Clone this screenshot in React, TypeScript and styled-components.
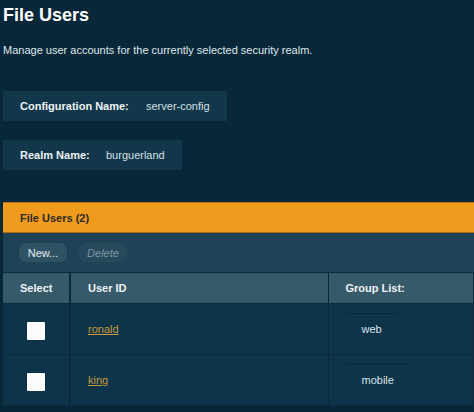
import React from 'react';
import styled, { createGlobalStyle } from 'styled-components';

const GlobalStyle = createGlobalStyle`
  html, body {
    margin: 0;
    padding: 0;
    background: #08283a;
    font-family: "Liberation Sans", Arial, sans-serif;
  }
`;

const Page = styled.div`
  padding: 3px 0 0 3px;
  color: #e9eff2;
  overflow: hidden;
`;

const Title = styled.h1`
  margin: 0;
  font-size: 18px;
  line-height: 24px;
  font-weight: bold;
  color: #ffffff;
`;

const Subtitle = styled.p`
  margin: 15px 0 0;
  font-size: 11px;
  line-height: 16px;
  color: #dfe7eb;
`;

const InfoList = styled.div`
  display: flex;
  flex-direction: column;
  align-items: flex-start;
  gap: 19px;
  margin-top: 33px;
`;

const InfoBox = styled.div`
  display: flex;
  align-items: center;
  height: 30px;
  padding: 0 17px;
  background: #12364a;
  font-size: 11px;
`;

const InfoLabel = styled.span<{ $width: number }>`
  width: ${p => p.$width}px;
  font-weight: bold;
  color: #eef3f5;
`;

const InfoValue = styled.span`
  color: #d6e0e5;
`;

const Panel = styled.section`
  margin-top: 32px;
`;

const PanelHeader = styled.div`
  height: 31px;
  display: flex;
  align-items: center;
  padding-left: 17px;
  background: #f09a1e;
  border-top: 1px solid #b8741a;
  border-bottom: 1px solid #a86a18;
  box-sizing: border-box;
  font-size: 11px;
  font-weight: bold;
  color: #2a2a24;
`;

const Toolbar = styled.div`
  height: 39px;
  display: flex;
  align-items: center;
  gap: 12px;
  padding: 0 16px;
  background: #1e4256;
  box-sizing: border-box;
`;

const ToolButton = styled.button<{ $disabled?: boolean }>`
  height: 19px;
  padding: 0 8px;
  border: none;
  border-radius: 7px;
  background: ${p => (p.$disabled ? '#27495b' : '#2e5365')};
  color: ${p => (p.$disabled ? '#7d98a5' : '#e6edf0')};
  font-family: inherit;
  font-size: 11px;
  font-style: ${p => (p.$disabled ? 'italic' : 'normal')};
  cursor: ${p => (p.$disabled ? 'default' : 'pointer')};
  min-width: 48px;
`;

const Table = styled.table`
  width: 100%;
  border-collapse: collapse;
  background: #0d3448;
  font-size: 11px;
`;

const HeadCell = styled.th<{ $width?: number }>`
  width: ${p => (p.$width ? `${p.$width}px` : 'auto')};
  height: 31px;
  padding: 0 0 0 17px;
  text-align: left;
  font-weight: bold;
  color: #eef3f5;
  background: #365a6a;
  border: 1px solid #0a2a3b;
  box-sizing: border-box;
  &:first-child {
    border-left: none;
    border-right-width: 2px;
  }
`;

const Cell = styled.td<{ $center?: boolean }>`
  height: 50px;
  padding: 0 0 0 ${p => (p.$center ? 0 : 17)}px;
  text-align: ${p => (p.$center ? 'center' : 'left')};
  border: 1px solid #0a2a3b;
  color: #dbe5ea;
  vertical-align: middle;
  &:first-child {
    border-left: none;
    border-right-width: 2px;
  }
`;

const Check = styled.input.attrs({ type: 'checkbox' })`
  appearance: none;
  width: 18px;
  height: 18px;
  margin: 4px 0 0;
  background: #fbfbfb;
  border-radius: 1px;
  vertical-align: middle;
`;

const UserLink = styled.a`
  color: #c79a3c;
  text-decoration: underline;
  cursor: pointer;
`;

const GroupList = styled.div`
  display: inline-block;
  margin-top: -10px;
  padding: 9px 16px 0;
  border-top: 1px solid #0a2838;
`;

const users = [
  { id: 'ronald', groups: 'web' },
  { id: 'king', groups: 'mobile' },
];

export default function App() {
  return (
    <>
      <GlobalStyle />
      <Page>
        <Title>File Users</Title>
        <Subtitle>Manage user accounts for the currently selected security realm.</Subtitle>
        <InfoList>
          <InfoBox>
            <InfoLabel $width={126}>Configuration Name:</InfoLabel>
            <InfoValue>server-config</InfoValue>
          </InfoBox>
          <InfoBox>
            <InfoLabel $width={86}>Realm Name:</InfoLabel>
            <InfoValue>burguerland</InfoValue>
          </InfoBox>
        </InfoList>
        <Panel>
          <PanelHeader>File Users ({users.length})</PanelHeader>
          <Toolbar>
            <ToolButton>New...</ToolButton>
            <ToolButton $disabled disabled>Delete</ToolButton>
          </Toolbar>
          <Table>
            <thead>
              <tr>
                <HeadCell $width={67}>Select</HeadCell>
                <HeadCell $width={258}>User ID</HeadCell>
                <HeadCell>Group List:</HeadCell>
              </tr>
            </thead>
            <tbody>
              {users.map(u => (
                <tr key={u.id}>
                  <Cell $center>
                    <Check />
                  </Cell>
                  <Cell>
                    <UserLink>{u.id}</UserLink>
                  </Cell>
                  <Cell>
                    <GroupList>{u.groups}</GroupList>
                  </Cell>
                </tr>
              ))}
            </tbody>
          </Table>
        </Panel>
      </Page>
    </>
  );
}
